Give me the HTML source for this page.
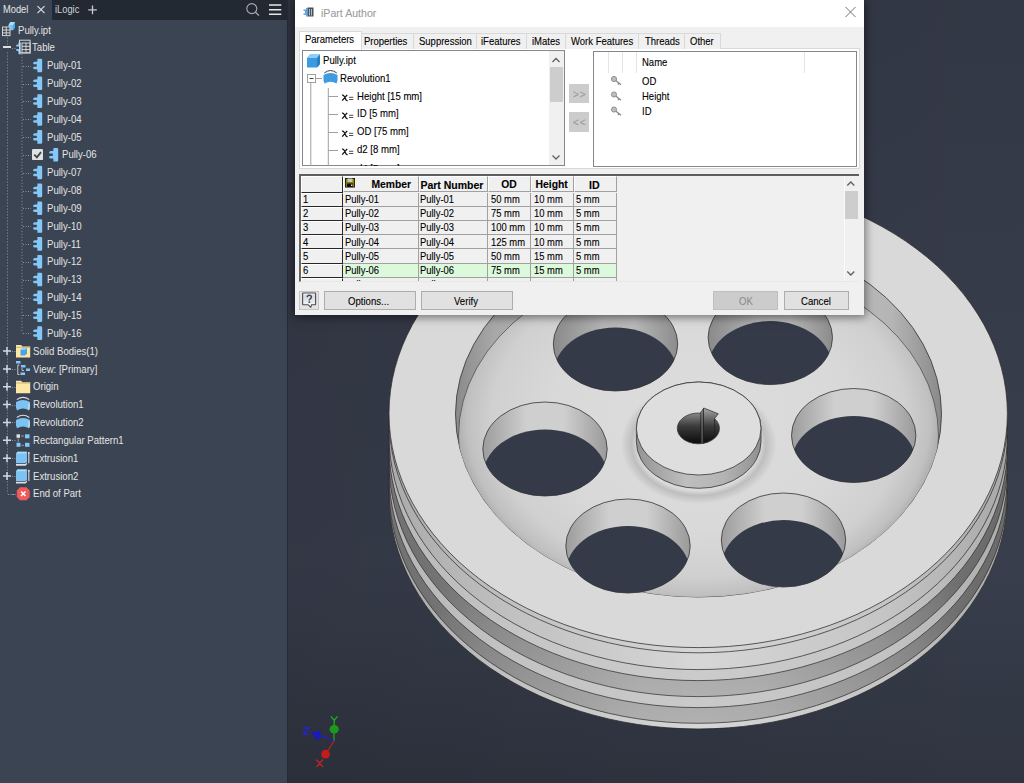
<!DOCTYPE html>
<html><head><meta charset="utf-8">
<style>
*{box-sizing:border-box;margin:0;padding:0}
html,body{width:1024px;height:783px;overflow:hidden;background:#343a48;font-family:"Liberation Sans",sans-serif}
.abs{position:absolute}
#panel{position:absolute;left:0;top:0;width:287px;height:783px;background:#3b4453;overflow:hidden}
#phead{position:absolute;left:0;top:0;width:287px;height:20px;background:#222933}
#split{position:absolute;left:287px;top:0;width:1px;height:783px;background:#252a33}
.tr{position:absolute;font-size:10px;color:#e4e4e4;white-space:nowrap;line-height:12px}
#dlg{position:absolute;left:295px;top:0;width:569px;height:315px;background:#f0f0f0;box-shadow:0 1px 9px 1px rgba(0,0,0,.5);overflow:hidden}
.dt{position:absolute;font-size:9.5px;color:#000;white-space:nowrap;line-height:12px;-webkit-text-stroke:0.1px currentColor}
</style></head>
<body>
<svg width="1024" height="783" class="abs" style="left:0;top:0">
<defs>
<linearGradient id="bg" x1="0" y1="0" x2="0" y2="783" gradientUnits="userSpaceOnUse">
<stop offset="0" stop-color="#333846"/><stop offset="0.72" stop-color="#393e4d"/><stop offset="1" stop-color="#2f3440"/></linearGradient>
<linearGradient id="bgh" x1="288" y1="0" x2="1024" y2="0" gradientUnits="userSpaceOnUse">
<stop offset="0" stop-color="#000" stop-opacity="0.1"/><stop offset="0.5" stop-color="#000" stop-opacity="0.04"/><stop offset="1" stop-color="#000" stop-opacity="0"/></linearGradient>
<linearGradient id="sideov" x1="390" y1="0" x2="1007" y2="0" gradientUnits="userSpaceOnUse">
<stop offset="0" stop-color="#000" stop-opacity="0.1"/><stop offset="0.2" stop-color="#000" stop-opacity="0.03"/><stop offset="0.5" stop-color="#000" stop-opacity="0"/><stop offset="0.8" stop-color="#000" stop-opacity="0.03"/><stop offset="1" stop-color="#000" stop-opacity="0.14"/></linearGradient>
<radialGradient id="hubao" cx="0.5" cy="0.5" r="0.5">
<stop offset="0" stop-color="#000" stop-opacity="0"/><stop offset="0.78" stop-color="#000" stop-opacity="0"/><stop offset="0.86" stop-color="#000" stop-opacity="0.13"/><stop offset="1" stop-color="#000" stop-opacity="0"/></radialGradient>
<linearGradient id="gov" x1="390" y1="0" x2="1007" y2="0" gradientUnits="userSpaceOnUse">
<stop offset="0" stop-color="#000" stop-opacity="0.28"/><stop offset="0.15" stop-color="#000" stop-opacity="0.14"/><stop offset="0.4" stop-color="#000" stop-opacity="0.02"/><stop offset="0.6" stop-color="#000" stop-opacity="0.02"/><stop offset="0.85" stop-color="#000" stop-opacity="0.14"/><stop offset="1" stop-color="#000" stop-opacity="0.3"/></linearGradient>
<linearGradient id="boreg" x1="0" y1="0" x2="0" y2="1">
<stop offset="0" stop-color="#a8a8a8"/><stop offset="0.5" stop-color="#3c3c3c"/><stop offset="1" stop-color="#0a0a0a"/></linearGradient>
<linearGradient id="side" x1="0" y1="0" x2="1" y2="0">
<stop offset="0" stop-color="#bdbdbd"/><stop offset="0.5" stop-color="#d6d6d6"/><stop offset="1" stop-color="#c4c4c4"/></linearGradient>
<linearGradient id="groove" x1="0" y1="0" x2="0" y2="1">
<stop offset="0" stop-color="#bdbdbd"/><stop offset="0.55" stop-color="#9c9c9c"/><stop offset="1" stop-color="#b4b4b4"/></linearGradient>
<radialGradient id="web" cx="698.5" cy="556" r="244" gradientUnits="userSpaceOnUse" gradientTransform="scale(1 0.755)">
<stop offset="0" stop-color="#dddddd"/><stop offset="0.6" stop-color="#d9d9d9"/><stop offset="0.85" stop-color="#d0d0d0"/><stop offset="0.95" stop-color="#c0c0c0"/><stop offset="1" stop-color="#a9a9a9"/></radialGradient>
<linearGradient id="wall" x1="0" y1="0" x2="1" y2="0">
<stop offset="0" stop-color="#8a8a8a"/><stop offset="0.08" stop-color="#a8a8a8"/><stop offset="0.3" stop-color="#c4c4c4"/><stop offset="0.7" stop-color="#c8c8c8"/><stop offset="0.9" stop-color="#b4b4b4"/><stop offset="1" stop-color="#8a8a8a"/></linearGradient>
<linearGradient id="hwall2" x1="0" y1="0" x2="1" y2="0">
<stop offset="0" stop-color="#8a8a8a"/><stop offset="0.4" stop-color="#b4b4b4"/><stop offset="0.65" stop-color="#b8b8b8"/><stop offset="1" stop-color="#8c8c8c"/></linearGradient>
<linearGradient id="hwall" x1="0" y1="0" x2="1" y2="0">
<stop offset="0" stop-color="#9c9c9c"/><stop offset="0.35" stop-color="#cfcfcf"/><stop offset="0.65" stop-color="#cfcfcf"/><stop offset="1" stop-color="#9a9a9a"/></linearGradient>
<linearGradient id="hubside" x1="0" y1="0" x2="1" y2="0">
<stop offset="0" stop-color="#949494"/><stop offset="0.4" stop-color="#bebebe"/><stop offset="0.7" stop-color="#b4b4b4"/><stop offset="1" stop-color="#909090"/></linearGradient>
<radialGradient id="bore" cx="0.35" cy="0.75" r="0.8">
<stop offset="0" stop-color="#0a0a0a"/><stop offset="0.5" stop-color="#2a2a2a"/><stop offset="1" stop-color="#9a9a9a"/></radialGradient>

<clipPath id="hc0"><ellipse cx="545.0" cy="476.5" rx="62.2" ry="47.0" /></clipPath>
<clipPath id="hc1"><ellipse cx="853.7" cy="463.0" rx="62.2" ry="47.0" /></clipPath>
<clipPath id="hc2"><ellipse cx="628.0" cy="573.0" rx="62.2" ry="47.0" /></clipPath>
<clipPath id="hc3"><ellipse cx="783.5" cy="567.0" rx="62.2" ry="47.0" /></clipPath>
<clipPath id="hc4"><ellipse cx="615.5" cy="374.5" rx="62.2" ry="47.0" /></clipPath>
<clipPath id="hc5"><ellipse cx="770.3" cy="368.1" rx="62.2" ry="47.0" /></clipPath>
<clipPath id="rc"><ellipse cx="698.5" cy="414.0" rx="243.0" ry="183.0" /></clipPath>
<clipPath id="wc"><ellipse cx="698.5" cy="442.0" rx="243.0" ry="183.0" /></clipPath>
</defs>
<rect x="288" y="0" width="736" height="783" fill="url(#bg)"/>
<rect x="288" y="0" width="736" height="783" fill="url(#bgh)"/>
<path d="M389.00,413.40 A309.20,232.30 0 0 1 1007.40,413.40 L1007.40,494.80 A309.20,234.20 0 0 1 389.00,494.80 Z" fill="url(#side)"/>
<path d="M389.00,435.40 A309.20,234.20 0 0 0 1007.40,435.40 L1007.40,446.40 A309.20,234.20 0 0 1 389.00,446.40 Z" fill="#cbcbcb"/>
<path d="M389.00,446.40 A309.20,234.20 0 0 0 1007.40,446.40 L1007.40,462.40 A309.20,234.20 0 0 1 389.00,462.40 Z" fill="url(#groove)"/>
<path d="M389.00,462.40 A309.20,234.20 0 0 0 1007.40,462.40 L1007.40,473.40 A309.20,234.20 0 0 1 389.00,473.40 Z" fill="#c9c9c9"/>
<path d="M389.00,473.40 A309.20,234.20 0 0 0 1007.40,473.40 L1007.40,489.10 A309.20,234.20 0 0 1 389.00,489.10 Z" fill="url(#groove)"/>
<path d="M389.00,446.40 A309.20,234.20 0 0 0 1007.40,446.40 L1007.40,462.40 A309.20,234.20 0 0 1 389.00,462.40 Z" fill="url(#gov)"/>
<path d="M389.00,473.40 A309.20,234.20 0 0 0 1007.40,473.40 L1007.40,489.10 A309.20,234.20 0 0 1 389.00,489.10 Z" fill="url(#gov)"/>
<path d="M389.00,418.60 A309.20,234.20 0 0 0 1007.40,418.60" fill="none" stroke="#3a3a3a" stroke-width="0.8"/>
<path d="M389.00,435.40 A309.20,234.20 0 0 0 1007.40,435.40" fill="none" stroke="#3a3a3a" stroke-width="0.8"/>
<path d="M389.00,446.40 A309.20,234.20 0 0 0 1007.40,446.40" fill="none" stroke="#3a3a3a" stroke-width="0.8"/>
<path d="M389.00,462.40 A309.20,234.20 0 0 0 1007.40,462.40" fill="none" stroke="#3a3a3a" stroke-width="0.8"/>
<path d="M389.00,473.40 A309.20,234.20 0 0 0 1007.40,473.40" fill="none" stroke="#3a3a3a" stroke-width="0.8"/>
<path d="M389.00,489.10 A309.20,234.20 0 0 0 1007.40,489.10" fill="none" stroke="#3a3a3a" stroke-width="0.8"/>
<path d="M389.00,413.40 A309.20,232.30 0 0 1 1007.40,413.40 L1007.40,494.80 A309.20,234.20 0 0 1 389.00,494.80 Z" fill="url(#sideov)" stroke="#2a2a2a" stroke-width="0.8"/>
<path d="M389.00,413.40 A309.20,232.30 0 0 1 1007.40,413.40 A309.20,234.20 0 0 1 389.00,413.40 Z" fill="#d9d9d9" stroke="#333" stroke-width="0.8"/>
<ellipse cx="698.5" cy="414.0" rx="243.0" ry="183.0" fill="url(#wall)" stroke="#333" stroke-width="0.8"/>
<g clip-path="url(#rc)"><ellipse cx="698.5" cy="436.0" rx="240.0" ry="178.0" fill="url(#web)" stroke="#444" stroke-width="0.7"/></g>
<ellipse cx="545.0" cy="449.0" rx="62.2" ry="47.0" fill="url(#hwall)"/>
<g clip-path="url(#hc0)"><ellipse cx="545.0" cy="449.0" rx="62.2" ry="47.0" fill="#343a48"/></g>
<ellipse cx="545.0" cy="449.0" rx="62.2" ry="47.0" fill="none" stroke="#333" stroke-width="0.8"/>
<ellipse cx="853.7" cy="435.5" rx="62.2" ry="47.0" fill="url(#hwall)"/>
<g clip-path="url(#hc1)"><ellipse cx="853.7" cy="435.5" rx="62.2" ry="47.0" fill="#343a48"/></g>
<ellipse cx="853.7" cy="435.5" rx="62.2" ry="47.0" fill="none" stroke="#333" stroke-width="0.8"/>
<ellipse cx="628.0" cy="546.0" rx="62.2" ry="47.0" fill="url(#hwall)"/>
<g clip-path="url(#hc2)"><ellipse cx="628.0" cy="546.0" rx="62.2" ry="47.0" fill="#343a48"/></g>
<ellipse cx="628.0" cy="546.0" rx="62.2" ry="47.0" fill="none" stroke="#333" stroke-width="0.8"/>
<ellipse cx="783.5" cy="540.0" rx="62.2" ry="47.0" fill="url(#hwall)"/>
<g clip-path="url(#hc3)"><ellipse cx="783.5" cy="540.0" rx="62.2" ry="47.0" fill="#343a48"/></g>
<ellipse cx="783.5" cy="540.0" rx="62.2" ry="47.0" fill="none" stroke="#333" stroke-width="0.8"/>
<ellipse cx="615.5" cy="344.0" rx="62.2" ry="47.0" fill="url(#hwall2)"/>
<g clip-path="url(#hc4)"><ellipse cx="615.5" cy="344.0" rx="62.2" ry="47.0" fill="#343a48"/></g>
<ellipse cx="615.5" cy="344.0" rx="62.2" ry="47.0" fill="none" stroke="#333" stroke-width="0.8"/>
<ellipse cx="770.3" cy="337.6" rx="62.2" ry="47.0" fill="url(#hwall2)"/>
<g clip-path="url(#hc5)"><ellipse cx="770.3" cy="337.6" rx="62.2" ry="47.0" fill="#343a48"/></g>
<ellipse cx="770.3" cy="337.6" rx="62.2" ry="47.0" fill="none" stroke="#333" stroke-width="0.8"/>
<ellipse cx="698.7" cy="444" rx="78" ry="60" fill="url(#hubao)"/>
<path d="M636.40,428.50 A62.30,46.50 0 0 1 761.00,428.50 L761.00,441.80 A62.30,46.50 0 0 1 636.40,441.80 Z" fill="url(#hubside)" stroke="#333" stroke-width="0.8"/>
<ellipse cx="698.7" cy="428.5" rx="62.3" ry="46.5" fill="#dedede" stroke="#333" stroke-width="0.8"/>
<path d="M700.2,413.1 L703.8,408 L718.3,413.8 L714.6,418.6 A21.1,15.4 0 1 1 700.2,413.1 Z" fill="url(#boreg)" stroke="#3a3a3a" stroke-width="0.8"/>
<path d="M700.8,413 V443.5 M703.5,408.5 V443.5" stroke="#1e1e1e" stroke-width="0.8"/>
<path d="M702.1,411 V443.5" stroke="#6a6a6a" stroke-width="1.6" opacity="0.7"/>
<path d="M714.6,418.6 V436" stroke="#222" stroke-width="0.8"/>
<g stroke-linecap="round">
<path d="M334,741 V728" stroke="#22aa22" stroke-width="1.2"/>
<path d="M334,741 L318,734.5" stroke="#2020cc" stroke-width="1.3"/>
<path d="M334,741 L327,752" stroke="#bb2222" stroke-width="1.2"/>
<ellipse cx="334.2" cy="729.3" rx="4.6" ry="4.2" fill="#1b991b"/><path d="M330,729 L334.2,723.8 L338.4,729 Z" fill="#1b991b"/>
<path d="M311.5,732.5 L320,730.5 L321.2,737.5 L316.5,740 Z" fill="#1a1abd"/>
<ellipse cx="325.6" cy="754.2" rx="4.3" ry="4.4" fill="#c21d1d"/>
<path d="M331.2,716.6 L334.2,720.5 L337.2,716.6 M334.2,720.5 V724" fill="none" stroke="#22aa22" stroke-width="1.3"/>
<path d="M303.5,728 H309 L303.5,734.2 H309.2" fill="none" stroke="#2323dd" stroke-width="1.3"/>
<path d="M316.8,760 L322.6,766.6 M322.6,760 L316.8,766.6" fill="none" stroke="#cc2222" stroke-width="1.3"/>
</g>
</svg>
<div id="panel">
<div id="phead"></div>
<div class="abs" style="left:0;top:0;width:52px;height:20px;background:#3b4453"></div>
<div class="tr" style="left:3px;top:3.79px;font-size:10.14px;color:#e6e6e6;transform:scaleX(0.9174);transform-origin:0 0;">Model</div>
<div class="tr" style="left:55px;top:3.79px;font-size:10.14px;color:#cfd2d6;transform:scaleX(0.9174);transform-origin:0 0;">iLogic</div>
<svg class="abs" style="left:0;top:0" width="287" height="783">
<path d="M37.5,6.2 L44.5,13.2 M44.5,6.2 L37.5,13.2" stroke="#dcdcdc" stroke-width="1.2"/>
<path d="M92.5,5.5 V14.2 M88.2,9.85 H96.8" stroke="#c8ccd2" stroke-width="1.3"/>
<circle cx="251.8" cy="8.6" r="5" fill="none" stroke="#a9adb3" stroke-width="1.1"/><path d="M255.5,12.3 L259,15.6" stroke="#a9adb3" stroke-width="1.3"/>
<path d="M269,5 H281.3 M269,9.8 H281.3 M269,14.3 H281.3" stroke="#e6e6e6" stroke-width="1.5"/>
<line x1="7.5" y1="37.5" x2="7.5" y2="493.84" stroke="#8d949f" stroke-width="1" stroke-dasharray="1,2"/>
<line x1="22" y1="53.84" x2="22" y2="333.28" stroke="#8d949f" stroke-width="1" stroke-dasharray="1,2"/>
<line x1="23" y1="66.5" x2="31" y2="66.5" stroke="#8d949f" stroke-width="1" stroke-dasharray="1,1.5"/>
<line x1="23" y1="84.5" x2="31" y2="84.5" stroke="#8d949f" stroke-width="1" stroke-dasharray="1,1.5"/>
<line x1="23" y1="101.5" x2="31" y2="101.5" stroke="#8d949f" stroke-width="1" stroke-dasharray="1,1.5"/>
<line x1="23" y1="119.5" x2="31" y2="119.5" stroke="#8d949f" stroke-width="1" stroke-dasharray="1,1.5"/>
<line x1="23" y1="137.5" x2="31" y2="137.5" stroke="#8d949f" stroke-width="1" stroke-dasharray="1,1.5"/>
<line x1="23" y1="155.5" x2="31" y2="155.5" stroke="#8d949f" stroke-width="1" stroke-dasharray="1,1.5"/>
<line x1="23" y1="173.5" x2="31" y2="173.5" stroke="#8d949f" stroke-width="1" stroke-dasharray="1,1.5"/>
<line x1="23" y1="191.5" x2="31" y2="191.5" stroke="#8d949f" stroke-width="1" stroke-dasharray="1,1.5"/>
<line x1="23" y1="208.5" x2="31" y2="208.5" stroke="#8d949f" stroke-width="1" stroke-dasharray="1,1.5"/>
<line x1="23" y1="226.5" x2="31" y2="226.5" stroke="#8d949f" stroke-width="1" stroke-dasharray="1,1.5"/>
<line x1="23" y1="244.5" x2="31" y2="244.5" stroke="#8d949f" stroke-width="1" stroke-dasharray="1,1.5"/>
<line x1="23" y1="262.5" x2="31" y2="262.5" stroke="#8d949f" stroke-width="1" stroke-dasharray="1,1.5"/>
<line x1="23" y1="280.5" x2="31" y2="280.5" stroke="#8d949f" stroke-width="1" stroke-dasharray="1,1.5"/>
<line x1="23" y1="298.5" x2="31" y2="298.5" stroke="#8d949f" stroke-width="1" stroke-dasharray="1,1.5"/>
<line x1="23" y1="315.5" x2="31" y2="315.5" stroke="#8d949f" stroke-width="1" stroke-dasharray="1,1.5"/>
<line x1="23" y1="333.5" x2="31" y2="333.5" stroke="#8d949f" stroke-width="1" stroke-dasharray="1,1.5"/>
<line x1="12" y1="351.5" x2="16" y2="351.5" stroke="#8d949f" stroke-width="1" stroke-dasharray="1,1.5"/>
<line x1="12" y1="369.5" x2="16" y2="369.5" stroke="#8d949f" stroke-width="1" stroke-dasharray="1,1.5"/>
<line x1="12" y1="387.5" x2="16" y2="387.5" stroke="#8d949f" stroke-width="1" stroke-dasharray="1,1.5"/>
<line x1="12" y1="405.5" x2="16" y2="405.5" stroke="#8d949f" stroke-width="1" stroke-dasharray="1,1.5"/>
<line x1="12" y1="422.5" x2="16" y2="422.5" stroke="#8d949f" stroke-width="1" stroke-dasharray="1,1.5"/>
<line x1="12" y1="440.5" x2="16" y2="440.5" stroke="#8d949f" stroke-width="1" stroke-dasharray="1,1.5"/>
<line x1="12" y1="458.5" x2="16" y2="458.5" stroke="#8d949f" stroke-width="1" stroke-dasharray="1,1.5"/>
<line x1="12" y1="476.5" x2="16" y2="476.5" stroke="#8d949f" stroke-width="1" stroke-dasharray="1,1.5"/>
<line x1="12" y1="494.5" x2="16" y2="494.5" stroke="#8d949f" stroke-width="1" stroke-dasharray="1,1.5"/>
<line x1="12" y1="48.5" x2="16" y2="48.5" stroke="#8d949f" stroke-width="1" stroke-dasharray="1,1.5"/>
<line x1="8" y1="494.5" x2="16" y2="494.5" stroke="#8d949f" stroke-width="1" stroke-dasharray="1,1.5"/>
<path d="M8.5,25.2 L10.3,22 H15 V27.5 L13,30.3 H8.5 Z" fill="#6cc0f5"/><path d="M8.5,25.2 L10.3,22 H15 L13,25.2 Z" fill="#a6defc"/><path d="M13,25.2 L15,22 V27.5 L13,30.3 Z" fill="#4aa8ea"/>
<rect x="2.5" y="27" width="7.5" height="8.6" fill="#3b4453" stroke="#d4d4d4" stroke-width="1"/>
<path d="M2.5,30 H10 M2.5,32.9 H10 M6.25,27 V35.6" stroke="#d4d4d4" stroke-width="1"/>
<rect x="2.5" y="44.8" width="9" height="6" fill="#3b4453"/>
<path d="M3,47.0 H11" stroke="#f0f0f0" stroke-width="1.8"/>
<path d="M20.8,42.3 V54.3 H18.5 V52.3 Q18.5,50.8 17,50.8 H16.2 V49.0 H19 V46.6 H16.2 V44.8 H17 Q18.5,44.8 18.5,43.3 V42.3 Z" fill="#84c8f7"/>
<rect x="19.5" y="40.2" width="10.6" height="12.7" fill="none" stroke="#d4d4d4" stroke-width="1"/>
<rect x="22" y="43.0" width="8.1" height="9.9" fill="none" stroke="#d4d4d4" stroke-width="1"/>
<path d="M22,46.3 H30 M22,49.6 H30 M26,43.0 V52.8" stroke="#d4d4d4" stroke-width="1"/>
<path transform="translate(32.8,58.38000000000001)" d="M4.6,0.3 H8.2 Q9.4,0.3 9.4,1.5 V12.7 Q9.4,13.9 8.2,13.9 H4.6 V11.6 Q4.6,10.8 3.8,10.8 H2 Q0.3,10.8 0.3,9.3 Q0.3,8.3 1.3,8.3 H4 V5.9 H1.3 Q0.3,5.9 0.3,4.9 Q0.3,3.4 2,3.4 H3.8 Q4.6,3.4 4.6,2.6 Z" fill="#84c8f7"/>
<path transform="translate(32.8,76.22)" d="M4.6,0.3 H8.2 Q9.4,0.3 9.4,1.5 V12.7 Q9.4,13.9 8.2,13.9 H4.6 V11.6 Q4.6,10.8 3.8,10.8 H2 Q0.3,10.8 0.3,9.3 Q0.3,8.3 1.3,8.3 H4 V5.9 H1.3 Q0.3,5.9 0.3,4.9 Q0.3,3.4 2,3.4 H3.8 Q4.6,3.4 4.6,2.6 Z" fill="#84c8f7"/>
<path transform="translate(32.8,94.06)" d="M4.6,0.3 H8.2 Q9.4,0.3 9.4,1.5 V12.7 Q9.4,13.9 8.2,13.9 H4.6 V11.6 Q4.6,10.8 3.8,10.8 H2 Q0.3,10.8 0.3,9.3 Q0.3,8.3 1.3,8.3 H4 V5.9 H1.3 Q0.3,5.9 0.3,4.9 Q0.3,3.4 2,3.4 H3.8 Q4.6,3.4 4.6,2.6 Z" fill="#84c8f7"/>
<path transform="translate(32.8,111.9)" d="M4.6,0.3 H8.2 Q9.4,0.3 9.4,1.5 V12.7 Q9.4,13.9 8.2,13.9 H4.6 V11.6 Q4.6,10.8 3.8,10.8 H2 Q0.3,10.8 0.3,9.3 Q0.3,8.3 1.3,8.3 H4 V5.9 H1.3 Q0.3,5.9 0.3,4.9 Q0.3,3.4 2,3.4 H3.8 Q4.6,3.4 4.6,2.6 Z" fill="#84c8f7"/>
<path transform="translate(32.8,129.73999999999998)" d="M4.6,0.3 H8.2 Q9.4,0.3 9.4,1.5 V12.7 Q9.4,13.9 8.2,13.9 H4.6 V11.6 Q4.6,10.8 3.8,10.8 H2 Q0.3,10.8 0.3,9.3 Q0.3,8.3 1.3,8.3 H4 V5.9 H1.3 Q0.3,5.9 0.3,4.9 Q0.3,3.4 2,3.4 H3.8 Q4.6,3.4 4.6,2.6 Z" fill="#84c8f7"/>
<path transform="translate(48.8,147.57999999999998)" d="M4.6,0.3 H8.2 Q9.4,0.3 9.4,1.5 V12.7 Q9.4,13.9 8.2,13.9 H4.6 V11.6 Q4.6,10.8 3.8,10.8 H2 Q0.3,10.8 0.3,9.3 Q0.3,8.3 1.3,8.3 H4 V5.9 H1.3 Q0.3,5.9 0.3,4.9 Q0.3,3.4 2,3.4 H3.8 Q4.6,3.4 4.6,2.6 Z" fill="#84c8f7"/>
<path transform="translate(32.8,165.42)" d="M4.6,0.3 H8.2 Q9.4,0.3 9.4,1.5 V12.7 Q9.4,13.9 8.2,13.9 H4.6 V11.6 Q4.6,10.8 3.8,10.8 H2 Q0.3,10.8 0.3,9.3 Q0.3,8.3 1.3,8.3 H4 V5.9 H1.3 Q0.3,5.9 0.3,4.9 Q0.3,3.4 2,3.4 H3.8 Q4.6,3.4 4.6,2.6 Z" fill="#84c8f7"/>
<path transform="translate(32.8,183.26)" d="M4.6,0.3 H8.2 Q9.4,0.3 9.4,1.5 V12.7 Q9.4,13.9 8.2,13.9 H4.6 V11.6 Q4.6,10.8 3.8,10.8 H2 Q0.3,10.8 0.3,9.3 Q0.3,8.3 1.3,8.3 H4 V5.9 H1.3 Q0.3,5.9 0.3,4.9 Q0.3,3.4 2,3.4 H3.8 Q4.6,3.4 4.6,2.6 Z" fill="#84c8f7"/>
<path transform="translate(32.8,201.1)" d="M4.6,0.3 H8.2 Q9.4,0.3 9.4,1.5 V12.7 Q9.4,13.9 8.2,13.9 H4.6 V11.6 Q4.6,10.8 3.8,10.8 H2 Q0.3,10.8 0.3,9.3 Q0.3,8.3 1.3,8.3 H4 V5.9 H1.3 Q0.3,5.9 0.3,4.9 Q0.3,3.4 2,3.4 H3.8 Q4.6,3.4 4.6,2.6 Z" fill="#84c8f7"/>
<path transform="translate(32.8,218.94)" d="M4.6,0.3 H8.2 Q9.4,0.3 9.4,1.5 V12.7 Q9.4,13.9 8.2,13.9 H4.6 V11.6 Q4.6,10.8 3.8,10.8 H2 Q0.3,10.8 0.3,9.3 Q0.3,8.3 1.3,8.3 H4 V5.9 H1.3 Q0.3,5.9 0.3,4.9 Q0.3,3.4 2,3.4 H3.8 Q4.6,3.4 4.6,2.6 Z" fill="#84c8f7"/>
<path transform="translate(32.8,236.77999999999997)" d="M4.6,0.3 H8.2 Q9.4,0.3 9.4,1.5 V12.7 Q9.4,13.9 8.2,13.9 H4.6 V11.6 Q4.6,10.8 3.8,10.8 H2 Q0.3,10.8 0.3,9.3 Q0.3,8.3 1.3,8.3 H4 V5.9 H1.3 Q0.3,5.9 0.3,4.9 Q0.3,3.4 2,3.4 H3.8 Q4.6,3.4 4.6,2.6 Z" fill="#84c8f7"/>
<path transform="translate(32.8,254.61999999999995)" d="M4.6,0.3 H8.2 Q9.4,0.3 9.4,1.5 V12.7 Q9.4,13.9 8.2,13.9 H4.6 V11.6 Q4.6,10.8 3.8,10.8 H2 Q0.3,10.8 0.3,9.3 Q0.3,8.3 1.3,8.3 H4 V5.9 H1.3 Q0.3,5.9 0.3,4.9 Q0.3,3.4 2,3.4 H3.8 Q4.6,3.4 4.6,2.6 Z" fill="#84c8f7"/>
<path transform="translate(32.8,272.46)" d="M4.6,0.3 H8.2 Q9.4,0.3 9.4,1.5 V12.7 Q9.4,13.9 8.2,13.9 H4.6 V11.6 Q4.6,10.8 3.8,10.8 H2 Q0.3,10.8 0.3,9.3 Q0.3,8.3 1.3,8.3 H4 V5.9 H1.3 Q0.3,5.9 0.3,4.9 Q0.3,3.4 2,3.4 H3.8 Q4.6,3.4 4.6,2.6 Z" fill="#84c8f7"/>
<path transform="translate(32.8,290.3)" d="M4.6,0.3 H8.2 Q9.4,0.3 9.4,1.5 V12.7 Q9.4,13.9 8.2,13.9 H4.6 V11.6 Q4.6,10.8 3.8,10.8 H2 Q0.3,10.8 0.3,9.3 Q0.3,8.3 1.3,8.3 H4 V5.9 H1.3 Q0.3,5.9 0.3,4.9 Q0.3,3.4 2,3.4 H3.8 Q4.6,3.4 4.6,2.6 Z" fill="#84c8f7"/>
<path transform="translate(32.8,308.14)" d="M4.6,0.3 H8.2 Q9.4,0.3 9.4,1.5 V12.7 Q9.4,13.9 8.2,13.9 H4.6 V11.6 Q4.6,10.8 3.8,10.8 H2 Q0.3,10.8 0.3,9.3 Q0.3,8.3 1.3,8.3 H4 V5.9 H1.3 Q0.3,5.9 0.3,4.9 Q0.3,3.4 2,3.4 H3.8 Q4.6,3.4 4.6,2.6 Z" fill="#84c8f7"/>
<path transform="translate(32.8,325.97999999999996)" d="M4.6,0.3 H8.2 Q9.4,0.3 9.4,1.5 V12.7 Q9.4,13.9 8.2,13.9 H4.6 V11.6 Q4.6,10.8 3.8,10.8 H2 Q0.3,10.8 0.3,9.3 Q0.3,8.3 1.3,8.3 H4 V5.9 H1.3 Q0.3,5.9 0.3,4.9 Q0.3,3.4 2,3.4 H3.8 Q4.6,3.4 4.6,2.6 Z" fill="#84c8f7"/>
<rect x="32" y="149.1" width="11" height="11" rx="1.2" fill="#e1e1e1"/>
<path d="M34.3,154.6 L36.9,157.3 L41,152.1" fill="none" stroke="#3b4453" stroke-width="1.8"/>
<path d="M7,347.1 V355.1 M3,351.1 H11" stroke="#d4d9df" stroke-width="1.5"/>
<path d="M7,365.0 V373.0 M3,369.0 H11" stroke="#d4d9df" stroke-width="1.5"/>
<path d="M7,382.8 V390.8 M3,386.8 H11" stroke="#d4d9df" stroke-width="1.5"/>
<path d="M7,400.6 V408.6 M3,404.6 H11" stroke="#d4d9df" stroke-width="1.5"/>
<path d="M7,418.5 V426.5 M3,422.5 H11" stroke="#d4d9df" stroke-width="1.5"/>
<path d="M7,436.3 V444.3 M3,440.3 H11" stroke="#d4d9df" stroke-width="1.5"/>
<path d="M7,454.2 V462.2 M3,458.2 H11" stroke="#d4d9df" stroke-width="1.5"/>
<path d="M7,472.0 V480.0 M3,476.0 H11" stroke="#d4d9df" stroke-width="1.5"/>
<path d="M16,345.1 H21 L22.5,346.6 H30.2 V357.6 H16 Z" fill="#fde7a4"/>
<path d="M16,347.3 H30.2" stroke="#b8a878" stroke-width="0.8"/>
<path d="M20.5,350.1 L22.5,348.1 H27 V353.6 L25,355.6 H20.5 Z" fill="#4aa3e6"/>
<path d="M20.5,350.1 L22.5,348.1 H27 L25,350.1 Z" fill="#8fd0fa"/>
<path d="M16,380.8 H21 L22.5,382.3 H30.2 V393.3 H16 Z" fill="#fde7a4"/>
<path d="M16,383.0 H30.2" stroke="#b8a878" stroke-width="0.8"/>
<rect x="16" y="361.0" width="4.5" height="2.5" fill="#84c8f7"/>
<path d="M19.5,365.0 H17.8 V374.5 H19.5" fill="none" stroke="#d8d8d8" stroke-width="0.9"/>
<rect x="21" y="365.0" width="4.5" height="2.5" fill="#84c8f7"/>
<rect x="20.5" y="372.5" width="4.5" height="2.5" fill="#84c8f7"/>
<rect x="26" y="368.5" width="4" height="2.5" fill="#84c8f7"/>
<path d="M22,368.0 V370.5 H24" fill="none" stroke="#d8d8d8" stroke-width="0.8"/>
<path d="M16,402.1 Q23,398.1 30,402.1 V407.6 L29,410.4 Q23,406.6 17,410.4 L16,407.6 Z" fill="#7cc3f3"/>
<path d="M16.8,399.6 Q23,395.1 29.3,399.6" fill="none" stroke="#dcdcdc" stroke-width="1.1"/>
<path d="M29,403.6 V409.6" stroke="#e0e0e0" stroke-width="1.2"/>
<path d="M16,420.0 Q23,416.0 30,420.0 V425.5 L29,428.3 Q23,424.5 17,428.3 L16,425.5 Z" fill="#7cc3f3"/>
<path d="M16.8,417.5 Q23,413.0 29.3,417.5" fill="none" stroke="#dcdcdc" stroke-width="1.1"/>
<path d="M29,421.5 V427.5" stroke="#e0e0e0" stroke-width="1.2"/>
<rect x="16.5" y="434.3" width="3.5" height="3.5" fill="#e0e0e0"/>
<rect x="25" y="434.3" width="4.5" height="4" fill="#84c8f7"/>
<rect x="16.5" y="442.8" width="4" height="4" fill="#84c8f7"/>
<rect x="25" y="442.8" width="4.5" height="4" fill="#84c8f7"/>
<path d="M21,436.0 H24 M18.2,438.3 V442.3 M21.5,445.3 H24" stroke="#aab0b8" stroke-width="0.8"/>
<path d="M16,453.4 L17.5,451.7 H27 V461.7 L25.5,463.2 H16 Z" fill="#7cc3f3"/>
<path d="M16,453.4 L17.5,451.7 H27 L25.5,453.4 Z" fill="#a8dcfb"/>
<path d="M16,464.0 H25.5 L27,462.5 V464.2 L25.5,465.7 H16 Z" fill="#e0e0e0"/>
<path d="M28.8,453.2 V463.2" stroke="#c8c8c8" stroke-width="1.3"/>
<circle cx="28.8" cy="453.0" r="1" fill="#e0e0e0"/>
<path d="M16,471.2 L17.5,469.5 H27 V479.5 L25.5,481.0 H16 Z" fill="#7cc3f3"/>
<path d="M16,471.2 L17.5,469.5 H27 L25.5,471.2 Z" fill="#a8dcfb"/>
<path d="M16,481.8 H25.5 L27,480.3 V482.0 L25.5,483.5 H16 Z" fill="#e0e0e0"/>
<path d="M28.8,471.0 V481.0" stroke="#c8c8c8" stroke-width="1.3"/>
<circle cx="28.8" cy="470.8" r="1" fill="#e0e0e0"/>
<path d="M20,487.3 H26.5 L29.7,490.5 V497.1 L26.5,500.3 H20 L16.8,497.1 V490.5 Z" fill="#ef5b5b"/>
<path d="M21,491.5 L25.5,496.1 M25.5,491.5 L21,496.1" stroke="#fff" stroke-width="1.5"/>
</svg>
<div class="tr" style="left:18px;top:24.57px;font-size:10.46px;color:#e4e4e4;transform:scaleX(0.9174);transform-origin:0 0;">Pully.ipt</div>
<div class="tr" style="left:32px;top:42.41px;font-size:10.46px;color:#e4e4e4;transform:scaleX(0.9174);transform-origin:0 0;">Table</div>
<div class="tr" style="left:46.5px;top:60.25px;font-size:10.46px;color:#e4e4e4;transform:scaleX(0.9174);transform-origin:0 0;">Pully-01</div>
<div class="tr" style="left:46.5px;top:78.09px;font-size:10.46px;color:#e4e4e4;transform:scaleX(0.9174);transform-origin:0 0;">Pully-02</div>
<div class="tr" style="left:46.5px;top:95.93px;font-size:10.46px;color:#e4e4e4;transform:scaleX(0.9174);transform-origin:0 0;">Pully-03</div>
<div class="tr" style="left:46.5px;top:113.77px;font-size:10.46px;color:#e4e4e4;transform:scaleX(0.9174);transform-origin:0 0;">Pully-04</div>
<div class="tr" style="left:46.5px;top:131.61px;font-size:10.46px;color:#e4e4e4;transform:scaleX(0.9174);transform-origin:0 0;">Pully-05</div>
<div class="tr" style="left:62.4px;top:149.45px;font-size:10.46px;color:#e4e4e4;transform:scaleX(0.9174);transform-origin:0 0;">Pully-06</div>
<div class="tr" style="left:46.5px;top:167.29px;font-size:10.46px;color:#e4e4e4;transform:scaleX(0.9174);transform-origin:0 0;">Pully-07</div>
<div class="tr" style="left:46.5px;top:185.13px;font-size:10.46px;color:#e4e4e4;transform:scaleX(0.9174);transform-origin:0 0;">Pully-08</div>
<div class="tr" style="left:46.5px;top:202.97px;font-size:10.46px;color:#e4e4e4;transform:scaleX(0.9174);transform-origin:0 0;">Pully-09</div>
<div class="tr" style="left:46.5px;top:220.81px;font-size:10.46px;color:#e4e4e4;transform:scaleX(0.9174);transform-origin:0 0;">Pully-10</div>
<div class="tr" style="left:46.5px;top:238.65px;font-size:10.46px;color:#e4e4e4;transform:scaleX(0.9174);transform-origin:0 0;">Pully-11</div>
<div class="tr" style="left:46.5px;top:256.49px;font-size:10.46px;color:#e4e4e4;transform:scaleX(0.9174);transform-origin:0 0;">Pully-12</div>
<div class="tr" style="left:46.5px;top:274.33px;font-size:10.46px;color:#e4e4e4;transform:scaleX(0.9174);transform-origin:0 0;">Pully-13</div>
<div class="tr" style="left:46.5px;top:292.17px;font-size:10.46px;color:#e4e4e4;transform:scaleX(0.9174);transform-origin:0 0;">Pully-14</div>
<div class="tr" style="left:46.5px;top:310.01px;font-size:10.46px;color:#e4e4e4;transform:scaleX(0.9174);transform-origin:0 0;">Pully-15</div>
<div class="tr" style="left:46.5px;top:327.85px;font-size:10.46px;color:#e4e4e4;transform:scaleX(0.9174);transform-origin:0 0;">Pully-16</div>
<div class="tr" style="left:32.5px;top:345.69px;font-size:10.46px;color:#e4e4e4;transform:scaleX(0.9174);transform-origin:0 0;">Solid Bodies(1)</div>
<div class="tr" style="left:32.5px;top:363.53px;font-size:10.46px;color:#e4e4e4;transform:scaleX(0.9174);transform-origin:0 0;">View: [Primary]</div>
<div class="tr" style="left:32.5px;top:381.37px;font-size:10.46px;color:#e4e4e4;transform:scaleX(0.9174);transform-origin:0 0;">Origin</div>
<div class="tr" style="left:32.5px;top:399.21px;font-size:10.46px;color:#e4e4e4;transform:scaleX(0.9174);transform-origin:0 0;">Revolution1</div>
<div class="tr" style="left:32.5px;top:417.05px;font-size:10.46px;color:#e4e4e4;transform:scaleX(0.9174);transform-origin:0 0;">Revolution2</div>
<div class="tr" style="left:32.5px;top:434.89px;font-size:10.46px;color:#e4e4e4;transform:scaleX(0.9174);transform-origin:0 0;">Rectangular Pattern1</div>
<div class="tr" style="left:32.5px;top:452.73px;font-size:10.46px;color:#e4e4e4;transform:scaleX(0.9174);transform-origin:0 0;">Extrusion1</div>
<div class="tr" style="left:32.5px;top:470.57px;font-size:10.46px;color:#e4e4e4;transform:scaleX(0.9174);transform-origin:0 0;">Extrusion2</div>
<div class="tr" style="left:32.5px;top:488.41px;font-size:10.46px;color:#e4e4e4;transform:scaleX(0.9174);transform-origin:0 0;">End of Part</div>
</div>
<div id="split"></div>
<div id="dlg">
<div class="abs" style="left:0.00px;top:0.00px;width:569.00px;height:27.00px;background:#fff"></div>
<div class="dt" style="left:26.00px;top:6.60px;font-size:11.55px;color:#9b9b9b;transform:scaleX(0.9174);transform-origin:0 0;">iPart Author</div>
<div class="abs" style="left:4.00px;top:48.00px;width:561.00px;height:120.50px;background:#fff;border:1px solid #d9d9d9"></div>
<div class="abs" style="left:66.00px;top:32.50px;width:53.00px;height:16.50px;background:#f0f0f0;border:1px solid #d9d9d9;border-bottom:none"></div>
<div class="dt" style="left:69.00px;top:35.61px;font-size:10.36px;color:#000;transform:scaleX(0.9174);transform-origin:0 0;">Properties</div>
<div class="abs" style="left:118.00px;top:32.50px;width:64.30px;height:16.50px;background:#f0f0f0;border:1px solid #d9d9d9;border-bottom:none"></div>
<div class="dt" style="left:123.60px;top:35.61px;font-size:10.36px;color:#000;transform:scaleX(0.9174);transform-origin:0 0;">Suppression</div>
<div class="abs" style="left:181.30px;top:32.50px;width:50.70px;height:16.50px;background:#f0f0f0;border:1px solid #d9d9d9;border-bottom:none"></div>
<div class="dt" style="left:186.40px;top:35.61px;font-size:10.36px;color:#000;transform:scaleX(0.9174);transform-origin:0 0;">iFeatures</div>
<div class="abs" style="left:231.00px;top:32.50px;width:39.50px;height:16.50px;background:#f0f0f0;border:1px solid #d9d9d9;border-bottom:none"></div>
<div class="dt" style="left:236.90px;top:35.61px;font-size:10.36px;color:#000;transform:scaleX(0.9174);transform-origin:0 0;">iMates</div>
<div class="abs" style="left:269.50px;top:32.50px;width:74.50px;height:16.50px;background:#f0f0f0;border:1px solid #d9d9d9;border-bottom:none"></div>
<div class="dt" style="left:275.50px;top:35.61px;font-size:10.36px;color:#000;transform:scaleX(0.9174);transform-origin:0 0;">Work Features</div>
<div class="abs" style="left:343.00px;top:32.50px;width:47.00px;height:16.50px;background:#f0f0f0;border:1px solid #d9d9d9;border-bottom:none"></div>
<div class="dt" style="left:349.80px;top:35.61px;font-size:10.36px;color:#000;transform:scaleX(0.9174);transform-origin:0 0;">Threads</div>
<div class="abs" style="left:389.00px;top:32.50px;width:37.00px;height:16.50px;background:#f0f0f0;border:1px solid #d9d9d9;border-bottom:none"></div>
<div class="dt" style="left:394.60px;top:35.61px;font-size:10.36px;color:#000;transform:scaleX(0.9174);transform-origin:0 0;">Other</div>
<div class="abs" style="left:4.00px;top:30.50px;width:63.00px;height:19.00px;background:#fff;border:1px solid #d9d9d9;border-bottom:none"></div>
<div class="dt" style="left:10.00px;top:33.71px;font-size:10.36px;color:#000;transform:scaleX(0.9174);transform-origin:0 0;">Parameters</div>
<div class="abs" style="left:7.00px;top:50.40px;width:262.50px;height:116.10px;background:#fff;border:1px solid #828790"></div>
<div class="abs" style="left:253.50px;top:51.40px;width:15.00px;height:114.10px;background:#f0f0f0"></div>
<div class="abs" style="left:254.50px;top:66.80px;width:13.00px;height:35.70px;background:#cdcdcd"></div>
<svg class="abs" style="left:0;top:0" width="569" height="315">
<g transform="translate(-295,0)">
<path d="M303.5,9.5 H306 V8 H307.5 V16.5 H306 V15 H303.5 V13.5 H305 V11 H303.5 Z" fill="#5aa9e6"/>
<rect x="307.5" y="7.5" width="6" height="9" fill="#48505e"/><path d="M309.5,9 V15.5 M311.5,9 V15.5" stroke="#cfd5dd" stroke-width="0.8"/>
<path d="M845.5,7 L855.5,17 M855.5,7 L845.5,17" stroke="#707070" stroke-width="1"/>
</g></svg>
<div class="dt" style="left:28.00px;top:55.07px;font-size:10.46px;color:#000;transform:scaleX(0.9174);transform-origin:0 0;">Pully.ipt</div>
<div class="dt" style="left:45.00px;top:73.17px;font-size:10.46px;color:#000;transform:scaleX(0.9174);transform-origin:0 0;">Revolution1</div>
<div class="dt" style="left:62.00px;top:90.57px;font-size:10.46px;color:#000;transform:scaleX(0.9174);transform-origin:0 0;">Height [15 mm]</div>
<div class="dt" style="left:62.00px;top:108.47px;font-size:10.46px;color:#000;transform:scaleX(0.9174);transform-origin:0 0;">ID [5 mm]</div>
<div class="dt" style="left:62.00px;top:126.47px;font-size:10.46px;color:#000;transform:scaleX(0.9174);transform-origin:0 0;">OD [75 mm]</div>
<div class="dt" style="left:62.00px;top:144.27px;font-size:10.46px;color:#000;transform:scaleX(0.9174);transform-origin:0 0;">d2 [8 mm]</div>
<div class="abs" style="left:8px;top:160px;width:245px;height:6px;overflow:hidden"><div class="dt" style="left:54px;top:2.43px;font-size:9.6px">d4 [5 mm]</div></div>
<div class="abs" style="left:274.00px;top:83.80px;width:20.00px;height:19.20px;background:#cccccc"></div>
<div class="abs" style="left:274.00px;top:112.00px;width:20.00px;height:19.60px;background:#cccccc"></div>
<div class="dt" style="left:277.50px;top:87.72px;font-size:10.90px;color:#9a9a9a;transform:scaleX(0.9174);transform-origin:0 0;letter-spacing:1px">&gt;&gt;</div>
<div class="dt" style="left:277.50px;top:116.02px;font-size:10.90px;color:#9a9a9a;transform:scaleX(0.9174);transform-origin:0 0;letter-spacing:1px">&lt;&lt;</div>
<div class="abs" style="left:298.00px;top:50.50px;width:264.00px;height:116.00px;background:#fff;border:1px solid #828790"></div>
<div class="abs" style="left:313.00px;top:52.00px;width:1.00px;height:20.70px;background:#e5e5e5"></div>
<div class="abs" style="left:327.00px;top:52.00px;width:1.00px;height:20.70px;background:#e5e5e5"></div>
<div class="abs" style="left:341.00px;top:52.00px;width:1.00px;height:20.70px;background:#e5e5e5"></div>
<div class="abs" style="left:509.00px;top:52.00px;width:1.00px;height:20.70px;background:#e5e5e5"></div>
<div class="dt" style="left:347.00px;top:56.61px;font-size:10.36px;color:#000;transform:scaleX(0.9174);transform-origin:0 0;">Name</div>
<div class="dt" style="left:346.50px;top:75.81px;font-size:10.36px;color:#000;transform:scaleX(0.9174);transform-origin:0 0;">OD</div>
<div class="dt" style="left:346.50px;top:90.91px;font-size:10.36px;color:#000;transform:scaleX(0.9174);transform-origin:0 0;">Height</div>
<div class="dt" style="left:346.50px;top:105.81px;font-size:10.36px;color:#000;transform:scaleX(0.9174);transform-origin:0 0;">ID</div>
<svg class="abs" style="left:0;top:0" width="569" height="315"><circle cx="319" cy="79.0" r="2.6" fill="#bdbdbd" stroke="#8a8a8a" stroke-width="0.9"/><path d="M321,80.8 L326,84.8 M324,83.1 L323,84.5" stroke="#8a8a8a" stroke-width="1.4"/><circle cx="319" cy="94.5" r="2.6" fill="#bdbdbd" stroke="#8a8a8a" stroke-width="0.9"/><path d="M321,96.3 L326,100.3 M324,98.6 L323,100" stroke="#8a8a8a" stroke-width="1.4"/><circle cx="319" cy="109.5" r="2.6" fill="#bdbdbd" stroke="#8a8a8a" stroke-width="0.9"/><path d="M321,111.3 L326,115.3 M324,113.6 L323,115" stroke="#8a8a8a" stroke-width="1.4"/></svg>
<div class="abs" style="left:4.00px;top:174.00px;width:559.60px;height:108.00px;background:#f0f0f0;border-top:2px solid #5e5e5e;border-left:2px solid #666;border-bottom:1px solid #e8e8e8"></div>
<div class="abs" style="left:5.50px;top:176.00px;width:42.00px;height:16.50px;background:#f0f0f0;border-top:1px solid #fff;border-left:1px solid #fff;border-right:1.5px solid #262626;border-bottom:1.5px solid #262626"></div>
<div class="abs" style="left:5.50px;top:192.50px;width:42.00px;height:14.00px;background:#f0f0f0;border-top:1px solid #fff;border-left:1px solid #fff;border-right:1.5px solid #262626;border-bottom:1.5px solid #262626"></div>
<div class="abs" style="left:5.50px;top:206.50px;width:42.00px;height:14.00px;background:#f0f0f0;border-top:1px solid #fff;border-left:1px solid #fff;border-right:1.5px solid #262626;border-bottom:1.5px solid #262626"></div>
<div class="abs" style="left:5.50px;top:220.50px;width:42.00px;height:14.50px;background:#f0f0f0;border-top:1px solid #fff;border-left:1px solid #fff;border-right:1.5px solid #262626;border-bottom:1.5px solid #262626"></div>
<div class="abs" style="left:5.50px;top:235.00px;width:42.00px;height:14.00px;background:#f0f0f0;border-top:1px solid #fff;border-left:1px solid #fff;border-right:1.5px solid #262626;border-bottom:1.5px solid #262626"></div>
<div class="abs" style="left:5.50px;top:249.00px;width:42.00px;height:14.50px;background:#f0f0f0;border-top:1px solid #fff;border-left:1px solid #fff;border-right:1.5px solid #262626;border-bottom:1.5px solid #262626"></div>
<div class="abs" style="left:5.50px;top:263.50px;width:42.00px;height:14.00px;background:#f0f0f0;border-top:1px solid #fff;border-left:1px solid #fff;border-right:1.5px solid #262626;border-bottom:1.5px solid #262626"></div>
<div class="abs" style="left:5.50px;top:277.50px;width:42.00px;height:3.50px;background:#f0f0f0;border-top:1px solid #fff;border-left:1px solid #fff;border-right:1.5px solid #262626"></div>
<div class="abs" style="left:47.50px;top:176.00px;width:76.00px;height:16.00px;background:#f0f0f0;border-right:1px solid #a0a0a0;border-bottom:1px solid #a0a0a0;border-top:1px solid #fff;border-left:1px solid #fff"></div>
<div class="abs" style="left:123.50px;top:176.00px;width:69.50px;height:16.00px;background:#f0f0f0;border-right:1px solid #a0a0a0;border-bottom:1px solid #a0a0a0;border-top:1px solid #fff;border-left:1px solid #fff"></div>
<div class="abs" style="left:193.00px;top:176.00px;width:43.00px;height:16.00px;background:#f0f0f0;border-right:1px solid #a0a0a0;border-bottom:1px solid #a0a0a0;border-top:1px solid #fff;border-left:1px solid #fff"></div>
<div class="abs" style="left:236.00px;top:176.00px;width:43.00px;height:16.00px;background:#f0f0f0;border-right:1px solid #a0a0a0;border-bottom:1px solid #a0a0a0;border-top:1px solid #fff;border-left:1px solid #fff"></div>
<div class="abs" style="left:279.00px;top:176.00px;width:43.00px;height:16.00px;background:#f0f0f0;border-right:1px solid #a0a0a0;border-bottom:1px solid #a0a0a0;border-top:1px solid #fff;border-left:1px solid #fff"></div>
<div class="abs" style="left:47.50px;top:192.50px;width:76.00px;height:14.00px;background:#f0f0f0;border-right:1px solid #a0a0a0;border-bottom:1px solid #a0a0a0;"></div>
<div class="abs" style="left:123.50px;top:192.50px;width:69.50px;height:14.00px;background:#f0f0f0;border-right:1px solid #a0a0a0;border-bottom:1px solid #a0a0a0;"></div>
<div class="abs" style="left:193.00px;top:192.50px;width:43.00px;height:14.00px;background:#f0f0f0;border-right:1px solid #a0a0a0;border-bottom:1px solid #a0a0a0;"></div>
<div class="abs" style="left:236.00px;top:192.50px;width:43.00px;height:14.00px;background:#f0f0f0;border-right:1px solid #a0a0a0;border-bottom:1px solid #a0a0a0;"></div>
<div class="abs" style="left:279.00px;top:192.50px;width:43.00px;height:14.00px;background:#f0f0f0;border-right:1px solid #a0a0a0;border-bottom:1px solid #a0a0a0;"></div>
<div class="abs" style="left:47.50px;top:206.50px;width:76.00px;height:14.00px;background:#f0f0f0;border-right:1px solid #a0a0a0;border-bottom:1px solid #a0a0a0;"></div>
<div class="abs" style="left:123.50px;top:206.50px;width:69.50px;height:14.00px;background:#f0f0f0;border-right:1px solid #a0a0a0;border-bottom:1px solid #a0a0a0;"></div>
<div class="abs" style="left:193.00px;top:206.50px;width:43.00px;height:14.00px;background:#f0f0f0;border-right:1px solid #a0a0a0;border-bottom:1px solid #a0a0a0;"></div>
<div class="abs" style="left:236.00px;top:206.50px;width:43.00px;height:14.00px;background:#f0f0f0;border-right:1px solid #a0a0a0;border-bottom:1px solid #a0a0a0;"></div>
<div class="abs" style="left:279.00px;top:206.50px;width:43.00px;height:14.00px;background:#f0f0f0;border-right:1px solid #a0a0a0;border-bottom:1px solid #a0a0a0;"></div>
<div class="abs" style="left:47.50px;top:220.50px;width:76.00px;height:14.50px;background:#f0f0f0;border-right:1px solid #a0a0a0;border-bottom:1px solid #a0a0a0;"></div>
<div class="abs" style="left:123.50px;top:220.50px;width:69.50px;height:14.50px;background:#f0f0f0;border-right:1px solid #a0a0a0;border-bottom:1px solid #a0a0a0;"></div>
<div class="abs" style="left:193.00px;top:220.50px;width:43.00px;height:14.50px;background:#f0f0f0;border-right:1px solid #a0a0a0;border-bottom:1px solid #a0a0a0;"></div>
<div class="abs" style="left:236.00px;top:220.50px;width:43.00px;height:14.50px;background:#f0f0f0;border-right:1px solid #a0a0a0;border-bottom:1px solid #a0a0a0;"></div>
<div class="abs" style="left:279.00px;top:220.50px;width:43.00px;height:14.50px;background:#f0f0f0;border-right:1px solid #a0a0a0;border-bottom:1px solid #a0a0a0;"></div>
<div class="abs" style="left:47.50px;top:235.00px;width:76.00px;height:14.00px;background:#f0f0f0;border-right:1px solid #a0a0a0;border-bottom:1px solid #a0a0a0;"></div>
<div class="abs" style="left:123.50px;top:235.00px;width:69.50px;height:14.00px;background:#f0f0f0;border-right:1px solid #a0a0a0;border-bottom:1px solid #a0a0a0;"></div>
<div class="abs" style="left:193.00px;top:235.00px;width:43.00px;height:14.00px;background:#f0f0f0;border-right:1px solid #a0a0a0;border-bottom:1px solid #a0a0a0;"></div>
<div class="abs" style="left:236.00px;top:235.00px;width:43.00px;height:14.00px;background:#f0f0f0;border-right:1px solid #a0a0a0;border-bottom:1px solid #a0a0a0;"></div>
<div class="abs" style="left:279.00px;top:235.00px;width:43.00px;height:14.00px;background:#f0f0f0;border-right:1px solid #a0a0a0;border-bottom:1px solid #a0a0a0;"></div>
<div class="abs" style="left:47.50px;top:249.00px;width:76.00px;height:14.50px;background:#f0f0f0;border-right:1px solid #a0a0a0;border-bottom:1px solid #a0a0a0;"></div>
<div class="abs" style="left:123.50px;top:249.00px;width:69.50px;height:14.50px;background:#f0f0f0;border-right:1px solid #a0a0a0;border-bottom:1px solid #a0a0a0;"></div>
<div class="abs" style="left:193.00px;top:249.00px;width:43.00px;height:14.50px;background:#f0f0f0;border-right:1px solid #a0a0a0;border-bottom:1px solid #a0a0a0;"></div>
<div class="abs" style="left:236.00px;top:249.00px;width:43.00px;height:14.50px;background:#f0f0f0;border-right:1px solid #a0a0a0;border-bottom:1px solid #a0a0a0;"></div>
<div class="abs" style="left:279.00px;top:249.00px;width:43.00px;height:14.50px;background:#f0f0f0;border-right:1px solid #a0a0a0;border-bottom:1px solid #a0a0a0;"></div>
<div class="abs" style="left:47.50px;top:263.50px;width:76.00px;height:14.00px;background:#dcf9dc;border-right:1px solid #a0a0a0;border-bottom:1px solid #a0a0a0;"></div>
<div class="abs" style="left:123.50px;top:263.50px;width:69.50px;height:14.00px;background:#dcf9dc;border-right:1px solid #a0a0a0;border-bottom:1px solid #a0a0a0;"></div>
<div class="abs" style="left:193.00px;top:263.50px;width:43.00px;height:14.00px;background:#dcf9dc;border-right:1px solid #a0a0a0;border-bottom:1px solid #a0a0a0;"></div>
<div class="abs" style="left:236.00px;top:263.50px;width:43.00px;height:14.00px;background:#dcf9dc;border-right:1px solid #a0a0a0;border-bottom:1px solid #a0a0a0;"></div>
<div class="abs" style="left:279.00px;top:263.50px;width:43.00px;height:14.00px;background:#dcf9dc;border-right:1px solid #a0a0a0;border-bottom:1px solid #a0a0a0;"></div>
<div class="abs" style="left:47.50px;top:277.50px;width:76.00px;height:3.50px;background:#f0f0f0;border-right:1px solid #a0a0a0;"></div>
<div class="abs" style="left:123.50px;top:277.50px;width:69.50px;height:3.50px;background:#f0f0f0;border-right:1px solid #a0a0a0;"></div>
<div class="abs" style="left:193.00px;top:277.50px;width:43.00px;height:3.50px;background:#f0f0f0;border-right:1px solid #a0a0a0;"></div>
<div class="abs" style="left:236.00px;top:277.50px;width:43.00px;height:3.50px;background:#f0f0f0;border-right:1px solid #a0a0a0;"></div>
<div class="abs" style="left:279.00px;top:277.50px;width:43.00px;height:3.50px;background:#f0f0f0;border-right:1px solid #a0a0a0;"></div>
<div class="dt" style="left:76.50px;top:178.83px;font-size:10.30px;color:#000;font-weight:bold;">Member</div>
<div class="dt" style="left:125.40px;top:178.76px;font-size:10.50px;color:#000;font-weight:bold;">Part Number</div>
<div class="dt" style="left:206.20px;top:178.83px;font-size:10.30px;color:#000;font-weight:bold;">OD</div>
<div class="dt" style="left:240.50px;top:178.80px;font-size:10.40px;color:#000;font-weight:bold;">Height</div>
<div class="dt" style="left:294.00px;top:178.73px;font-size:10.60px;color:#000;font-weight:bold;">ID</div>
<svg class="abs" style="left:50px;top:178px" width="11" height="10"><rect x="0" y="0" width="10" height="9.5" fill="#111"/><rect x="0.8" y="0.8" width="8.4" height="8" fill="#8a8000"/><rect x="2.5" y="0.5" width="5" height="3.5" fill="#c8c8c8"/><rect x="2" y="5.5" width="6" height="3.5" fill="#111"/><rect x="6" y="6.5" width="1.5" height="1.5" fill="#ddd"/></svg>
<div class="dt" style="left:8.00px;top:194.01px;font-size:10.36px;color:#000;transform:scaleX(0.9174);transform-origin:0 0;">1</div>
<div class="dt" style="left:50.00px;top:194.05px;font-size:10.25px;color:#000;transform:scaleX(0.9174);transform-origin:0 0;">Pully-01</div>
<div class="dt" style="left:125.00px;top:194.05px;font-size:10.25px;color:#000;transform:scaleX(0.9174);transform-origin:0 0;">Pully-01</div>
<div class="dt" style="left:195.70px;top:194.05px;font-size:10.25px;color:#000;transform:scaleX(0.9174);transform-origin:0 0;">50 mm</div>
<div class="dt" style="left:238.80px;top:194.05px;font-size:10.25px;color:#000;transform:scaleX(0.9174);transform-origin:0 0;">10 mm</div>
<div class="dt" style="left:281.40px;top:194.05px;font-size:10.25px;color:#000;transform:scaleX(0.9174);transform-origin:0 0;">5 mm</div>
<div class="dt" style="left:8.00px;top:208.01px;font-size:10.36px;color:#000;transform:scaleX(0.9174);transform-origin:0 0;">2</div>
<div class="dt" style="left:50.00px;top:208.05px;font-size:10.25px;color:#000;transform:scaleX(0.9174);transform-origin:0 0;">Pully-02</div>
<div class="dt" style="left:125.00px;top:208.05px;font-size:10.25px;color:#000;transform:scaleX(0.9174);transform-origin:0 0;">Pully-02</div>
<div class="dt" style="left:195.70px;top:208.05px;font-size:10.25px;color:#000;transform:scaleX(0.9174);transform-origin:0 0;">75 mm</div>
<div class="dt" style="left:238.80px;top:208.05px;font-size:10.25px;color:#000;transform:scaleX(0.9174);transform-origin:0 0;">10 mm</div>
<div class="dt" style="left:281.40px;top:208.05px;font-size:10.25px;color:#000;transform:scaleX(0.9174);transform-origin:0 0;">5 mm</div>
<div class="dt" style="left:8.00px;top:222.01px;font-size:10.36px;color:#000;transform:scaleX(0.9174);transform-origin:0 0;">3</div>
<div class="dt" style="left:50.00px;top:222.05px;font-size:10.25px;color:#000;transform:scaleX(0.9174);transform-origin:0 0;">Pully-03</div>
<div class="dt" style="left:125.00px;top:222.05px;font-size:10.25px;color:#000;transform:scaleX(0.9174);transform-origin:0 0;">Pully-03</div>
<div class="dt" style="left:195.70px;top:222.05px;font-size:10.25px;color:#000;transform:scaleX(0.9174);transform-origin:0 0;">100 mm</div>
<div class="dt" style="left:238.80px;top:222.05px;font-size:10.25px;color:#000;transform:scaleX(0.9174);transform-origin:0 0;">10 mm</div>
<div class="dt" style="left:281.40px;top:222.05px;font-size:10.25px;color:#000;transform:scaleX(0.9174);transform-origin:0 0;">5 mm</div>
<div class="dt" style="left:8.00px;top:236.51px;font-size:10.36px;color:#000;transform:scaleX(0.9174);transform-origin:0 0;">4</div>
<div class="dt" style="left:50.00px;top:236.55px;font-size:10.25px;color:#000;transform:scaleX(0.9174);transform-origin:0 0;">Pully-04</div>
<div class="dt" style="left:125.00px;top:236.55px;font-size:10.25px;color:#000;transform:scaleX(0.9174);transform-origin:0 0;">Pully-04</div>
<div class="dt" style="left:195.70px;top:236.55px;font-size:10.25px;color:#000;transform:scaleX(0.9174);transform-origin:0 0;">125 mm</div>
<div class="dt" style="left:238.80px;top:236.55px;font-size:10.25px;color:#000;transform:scaleX(0.9174);transform-origin:0 0;">10 mm</div>
<div class="dt" style="left:281.40px;top:236.55px;font-size:10.25px;color:#000;transform:scaleX(0.9174);transform-origin:0 0;">5 mm</div>
<div class="dt" style="left:8.00px;top:250.51px;font-size:10.36px;color:#000;transform:scaleX(0.9174);transform-origin:0 0;">5</div>
<div class="dt" style="left:50.00px;top:250.55px;font-size:10.25px;color:#000;transform:scaleX(0.9174);transform-origin:0 0;">Pully-05</div>
<div class="dt" style="left:125.00px;top:250.55px;font-size:10.25px;color:#000;transform:scaleX(0.9174);transform-origin:0 0;">Pully-05</div>
<div class="dt" style="left:195.70px;top:250.55px;font-size:10.25px;color:#000;transform:scaleX(0.9174);transform-origin:0 0;">50 mm</div>
<div class="dt" style="left:238.80px;top:250.55px;font-size:10.25px;color:#000;transform:scaleX(0.9174);transform-origin:0 0;">15 mm</div>
<div class="dt" style="left:281.40px;top:250.55px;font-size:10.25px;color:#000;transform:scaleX(0.9174);transform-origin:0 0;">5 mm</div>
<div class="dt" style="left:8.00px;top:265.01px;font-size:10.36px;color:#000;transform:scaleX(0.9174);transform-origin:0 0;">6</div>
<div class="dt" style="left:50.00px;top:265.05px;font-size:10.25px;color:#000;transform:scaleX(0.9174);transform-origin:0 0;">Pully-06</div>
<div class="dt" style="left:125.00px;top:265.05px;font-size:10.25px;color:#000;transform:scaleX(0.9174);transform-origin:0 0;">Pully-06</div>
<div class="dt" style="left:195.70px;top:265.05px;font-size:10.25px;color:#000;transform:scaleX(0.9174);transform-origin:0 0;">75 mm</div>
<div class="dt" style="left:238.80px;top:265.05px;font-size:10.25px;color:#000;transform:scaleX(0.9174);transform-origin:0 0;">15 mm</div>
<div class="dt" style="left:281.40px;top:265.05px;font-size:10.25px;color:#000;transform:scaleX(0.9174);transform-origin:0 0;">5 mm</div>
<div class="abs" style="left:48px;top:279.3px;width:275px;height:2px;overflow:hidden"><div class="dt" style="left:2px;top:-0.97px;font-size:9.4px">Pully-07</div><div class="dt" style="left:77px;top:-0.97px;font-size:9.4px">Pully-07</div></div>
<div class="abs" style="left:548.70px;top:176.00px;width:13.90px;height:105.00px;background:#f0f0f0;border-left:1px solid #fafafa"></div>
<div class="abs" style="left:549.50px;top:191.00px;width:13.10px;height:27.80px;background:#cdcdcd"></div>
<svg class="abs" style="left:0;top:0" width="569" height="315"><g transform="translate(-295,0)"><path d="M847.3,185.5 L850.8,182 L854.3,185.5" fill="none" stroke="#606060" stroke-width="1.3"/><path d="M847.3,271.5 L850.8,275 L854.3,271.5" fill="none" stroke="#606060" stroke-width="1.3"/></g></svg>
<div class="abs" style="left:4.30px;top:291.20px;width:19.40px;height:18.50px;background:#e4e4e4;border:1px solid #c6c6c6"></div>
<svg class="abs" style="left:4px;top:288px" width="22" height="22"><defs><linearGradient id="hq" x1="0" y1="0" x2="0" y2="1"><stop offset="0" stop-color="#fdfdfd"/><stop offset="0.2" stop-color="#d3d9e2"/><stop offset="1" stop-color="#fbfbfc"/></linearGradient></defs><path d="M3.6,5.5 Q3.6,5 4.1,5 H16.1 Q16.6,5 16.6,5.5 V16.2 Q16.6,16.7 16.1,16.7 H12.6 L11.8,19.2 L9,16.7 H4.1 Q3.6,16.7 3.6,16.2 Z" fill="url(#hq)" stroke="#4a4d52" stroke-width="1.1"/><path d="M8.2,9.3 Q8.3,7.2 10.3,7.2 Q12.4,7.2 12.4,9.1 Q12.4,10.3 11.2,10.9 Q10.3,11.3 10.3,12.4" fill="none" stroke="#45484d" stroke-width="1.5"/><rect x="9.5" y="13.3" width="1.7" height="1.6" fill="#45484d"/></svg>
<div class="abs" style="left:29.00px;top:291.20px;width:92.00px;height:18.60px;background:#e1e1e1;border:1px solid #adadad"></div>
<div class="dt" style="left:52.50px;top:295.87px;font-size:10.46px;color:#000;transform:scaleX(0.9174);transform-origin:0 0;">Options...</div>
<div class="abs" style="left:126.30px;top:291.20px;width:91.70px;height:18.60px;background:#e1e1e1;border:1px solid #adadad"></div>
<div class="dt" style="left:159.00px;top:295.87px;font-size:10.46px;color:#000;transform:scaleX(0.9174);transform-origin:0 0;">Verify</div>
<div class="abs" style="left:418.00px;top:291.20px;width:65.00px;height:18.60px;background:#cccccc;border:1px solid #bfbfbf"></div>
<div class="dt" style="left:443.50px;top:295.87px;font-size:10.46px;color:#8d8d8d;transform:scaleX(0.9174);transform-origin:0 0;">OK</div>
<div class="abs" style="left:488.60px;top:291.20px;width:65.00px;height:18.60px;background:#e1e1e1;border:1px solid #adadad"></div>
<div class="dt" style="left:506.00px;top:295.87px;font-size:10.46px;color:#000;transform:scaleX(0.9174);transform-origin:0 0;">Cancel</div>
<svg class="abs" style="left:0;top:0" width="569" height="315"><g transform="translate(-295,0)">
<path d="M552.5,62 L556,58.5 L559.5,62" fill="none" stroke="#606060" stroke-width="1.3"/>
<path d="M552.5,155.5 L556,159 L559.5,155.5" fill="none" stroke="#606060" stroke-width="1.3"/>
<path d="M310.8,82.5 V166 M328.3,88 V166 M316,78.5 H322 M328.3,96.5 H338 M328.3,114.5 H338 M328.3,132.5 H338 M328.3,150.5 H338" stroke="#a0a0a0" stroke-width="1"/>
<rect x="307.5" y="74.5" width="8" height="8" fill="#fff" stroke="#a0a0a0" stroke-width="1"/><path d="M309.5,78.5 H313.5" stroke="#404040" stroke-width="1"/>
<path d="M307,58 L310,54.5 H320 V64 L317,67.5 H307 Z" fill="#3c9ae0"/><path d="M307,58 L310,54.5 H320 L317,58 Z" fill="#8fcdf7"/><path d="M317,58 L320,54.5 V64 L317,67.5 Z" fill="#2a7fc4"/>
<path d="M323.5,75 Q330.5,71 337.5,75 V80.5 L336.5,83.5 Q330.5,80 324.5,83.5 L323.5,80.5 Z" fill="#3f9be0"/>
<path d="M324.3,73 Q330.5,68 336.8,73" fill="none" stroke="#404040" stroke-width="1"/>
<path d="M342,95.2 Q343.5,94.7 344.5,97.0 L346.2,100.1 Q346.8,100.9 347.6,100.5 M342.2,100.7 L347.2,94.9" fill="none" stroke="#111" stroke-width="1.3"/>
<path d="M349,97.3 H353.3 M349,99.5 H353.3" stroke="#222" stroke-width="0.8"/>
<path d="M342,113.2 Q343.5,112.7 344.5,115.0 L346.2,118.1 Q346.8,118.9 347.6,118.5 M342.2,118.7 L347.2,112.9" fill="none" stroke="#111" stroke-width="1.3"/>
<path d="M349,115.3 H353.3 M349,117.5 H353.3" stroke="#222" stroke-width="0.8"/>
<path d="M342,131.2 Q343.5,130.7 344.5,133.0 L346.2,136.1 Q346.8,136.9 347.6,136.5 M342.2,136.7 L347.2,130.9" fill="none" stroke="#111" stroke-width="1.3"/>
<path d="M349,133.3 H353.3 M349,135.5 H353.3" stroke="#222" stroke-width="0.8"/>
<path d="M342,149.2 Q343.5,148.7 344.5,151.0 L346.2,154.1 Q346.8,154.9 347.6,154.5 M342.2,154.7 L347.2,148.9" fill="none" stroke="#111" stroke-width="1.3"/>
<path d="M349,151.3 H353.3 M349,153.5 H353.3" stroke="#222" stroke-width="0.8"/>
</g></svg>
</div>
</body></html>
